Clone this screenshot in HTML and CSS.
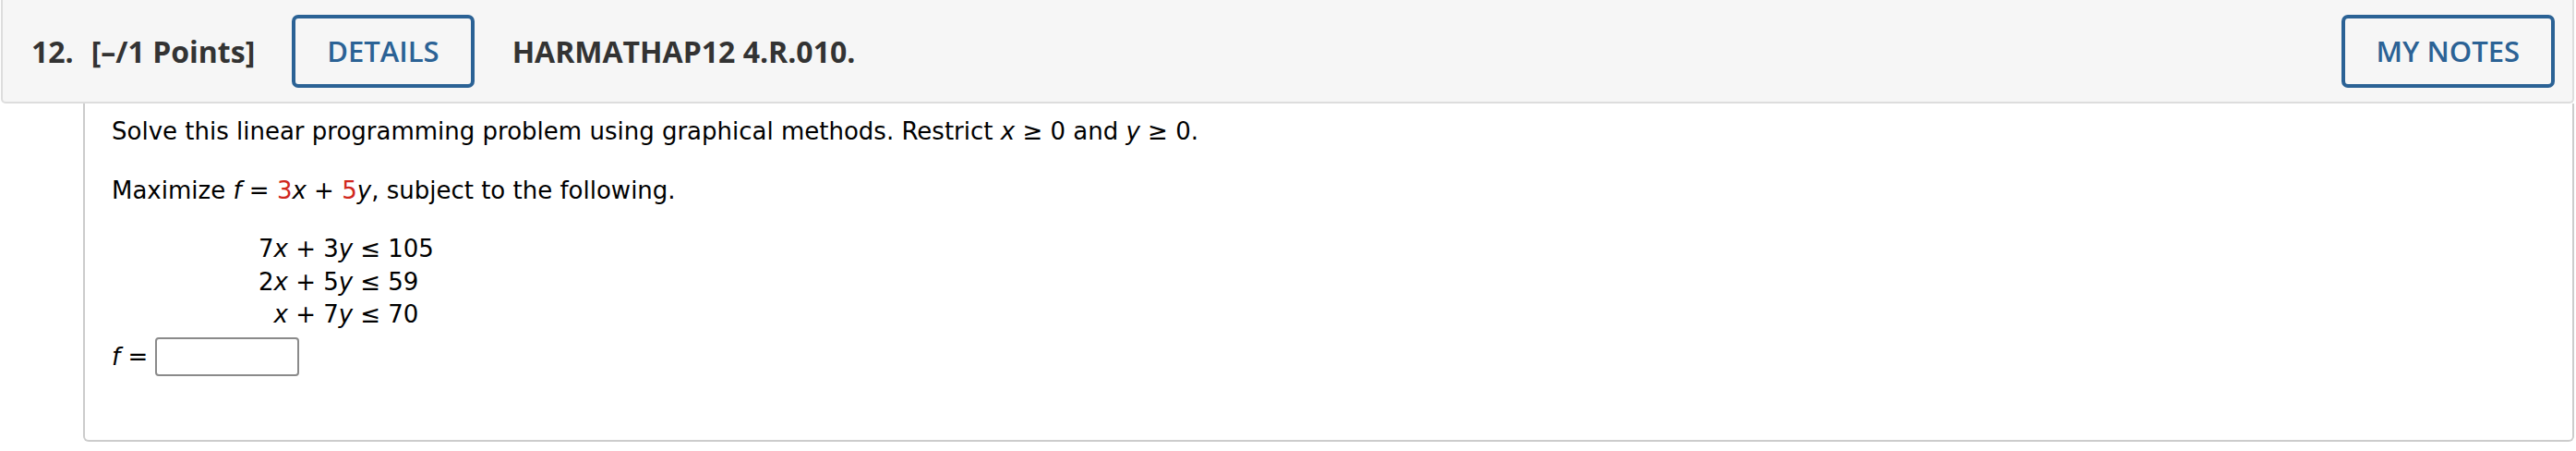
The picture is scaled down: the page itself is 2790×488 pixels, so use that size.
FILE: index.html
```html
<!DOCTYPE html>
<html lang="en">
<head>
<meta charset="utf-8">
<title>Question 12</title>
<link rel="stylesheet" href="styles.css">
</head>
<body>
<div class="question">
  <div class="qhead">
    <span class="qnum">12.</span>
    <span class="qpts">[–/1 Points]</span>
    <button class="qbtn" type="button">DETAILS</button>
    <span class="qcode">HARMATHAP12 4.R.010.</span>
    <button class="qbtn notes" type="button">MY NOTES</button>
  </div>
  <div class="qbody">
    <p class="line">Solve this linear programming problem using graphical methods. Restrict <i>x</i> ≥ 0 and <i>y</i> ≥ 0.</p>
    <p class="line">Maximize <i>f</i> = <span class="red">3</span><i>x</i> + <span class="red">5</span><i>y</i>, subject to the following.</p>
    <div class="system">
      <span class="lhs">7<i>x</i> + 3<i>y</i></span><span class="rhs">≤ 105</span>
      <span class="lhs">2<i>x</i> + 5<i>y</i></span><span class="rhs">≤ 59</span>
      <span class="lhs"><i>x</i> + 7<i>y</i></span><span class="rhs">≤ 70</span>
    </div>
    <div class="answer">
      <span class="alabel"><i>f</i> =</span>
      <input class="abox" type="text" aria-label="f">
    </div>
  </div>
</div>
</body>
</html>
```
FILE: styles.css
```css
html, body {
  margin: 0;
  padding: 0;
  background: #ffffff;
}

.question {
  width: 2790px;
}

.qhead {
  display: flex;
  align-items: center;
  height: 110px;
  margin: 0 2px 0 1px;
  padding: 0 19px 0 31px;
  background: #f6f6f6;
  border: 2px solid #dddddd;
  border-top: none;
  border-radius: 0 0 5px 5px;
  font-family: "Open Sans", "Liberation Sans", sans-serif;
  font-weight: 700;
  font-size: 32px;
  color: #333333;
}

.qnum {
  margin-right: 19px;
}

.qpts {
  margin-right: 40px;
}

.qcode {
  margin-left: 41px;
}

.qbtn {
  box-sizing: border-box;
  height: 79px;
  padding: 0 34px;
  background: transparent;
  border: 4px solid #2b6295;
  border-radius: 7px;
  font-family: "Open Sans", "Liberation Sans", sans-serif;
  font-weight: 600;
  font-size: 31px;
  color: #2b6295;
  letter-spacing: 0;
}

.qbtn.notes {
  margin-left: auto;
}

.qbody {
  box-sizing: border-box;
  height: 366px;
  margin: 0 2px 0 90px;
  padding: 12px 29px 0 29px;
  border: 2px solid #cccccc;
  border-top: none;
  border-radius: 0 0 6px 6px;
  font-family: "DejaVu Sans", Verdana, sans-serif;
  font-size: 26px;
  line-height: 36px;
  color: #000000;
}

.line {
  margin: 0 0 28px 0;
}

.red {
  color: #d0271d;
}

.system {
  display: grid;
  grid-template-columns: max-content max-content;
  column-gap: 8px;
  margin: 2px 0 0 159px;
  line-height: 35.5px;
}

.lhs {
  text-align: right;
}

.rhs {
  text-align: left;
}

.answer {
  display: flex;
  align-items: center;
  margin-top: 6px;
}

.alabel {
  margin-right: 8px;
}

.abox {
  box-sizing: border-box;
  width: 156px;
  height: 42px;
  border: 2px solid #8a8a8a;
  border-radius: 4px;
  background: #ffffff;
  padding: 0 6px;
  font-family: "DejaVu Sans", Verdana, sans-serif;
  font-size: 26px;
}
```
